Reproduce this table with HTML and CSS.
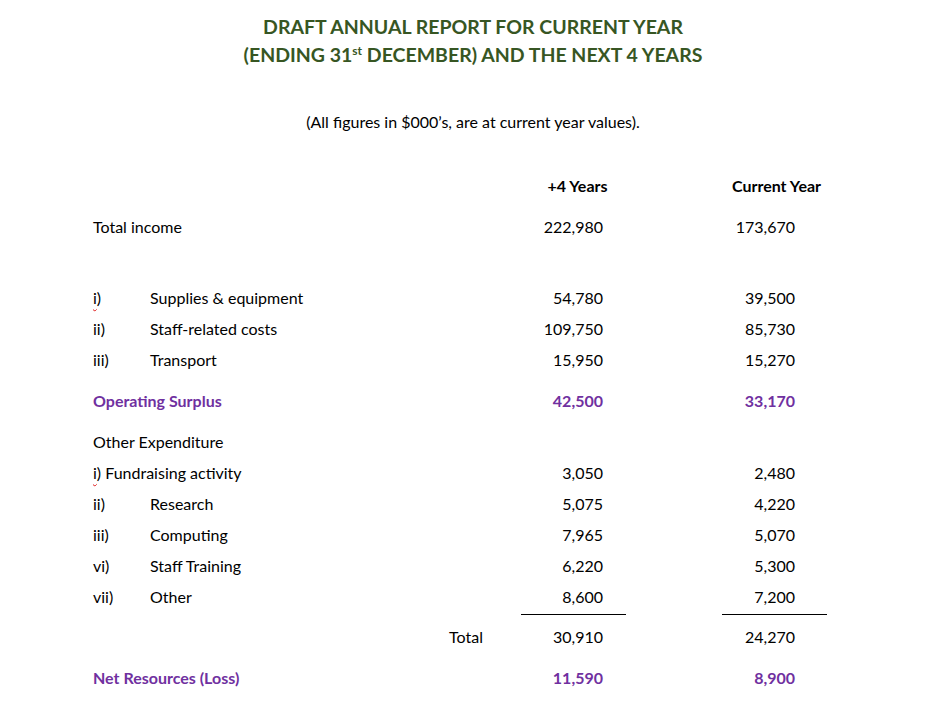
FILE: index.html
```html
<!DOCTYPE html>
<html>
<head>
<meta charset="utf-8">
<link rel="stylesheet" href="styles.css">
</head>
<body>
<div class="page">
  <h1 class="title">DRAFT ANNUAL REPORT FOR CURRENT YEAR<br>(ENDING 31<sup>st</sup> DECEMBER) AND THE NEXT 4 YEARS</h1>
  <p class="subtitle">(All figures in $000’s, are at current year values).</p>

  <div class="sheet">
    <div class="row head">
      <span class="lab"></span><span class="num c1">+4 Years</span><span class="num c2">Current Year</span>
    </div>
    <div class="row sp">
      <span class="lab">Total income</span><span class="num c1">222,980</span><span class="num c2">173,670</span>
    </div>
    <div class="row big">
      <span class="rn"><span class="sq">i</span>)</span><span class="sub">Supplies &amp; equipment</span><span class="num c1">54,780</span><span class="num c2">39,500</span>
    </div>
    <div class="row">
      <span class="rn">ii)</span><span class="sub">Staff-related costs</span><span class="num c1">109,750</span><span class="num c2">85,730</span>
    </div>
    <div class="row">
      <span class="rn">iii)</span><span class="sub">Transport</span><span class="num c1">15,950</span><span class="num c2">15,270</span>
    </div>
    <div class="row sp purple">
      <span class="lab">Operating Surplus</span><span class="num c1">42,500</span><span class="num c2">33,170</span>
    </div>
    <div class="row sp">
      <span class="lab">Other Expenditure</span>
    </div>
    <div class="row">
      <span class="lab"><span class="sq">i</span>) Fundraising activity</span><span class="num c1">3,050</span><span class="num c2">2,480</span>
    </div>
    <div class="row">
      <span class="rn">ii)</span><span class="sub">Research</span><span class="num c1">5,075</span><span class="num c2">4,220</span>
    </div>
    <div class="row">
      <span class="rn">iii)</span><span class="sub">Computing</span><span class="num c1">7,965</span><span class="num c2">5,070</span>
    </div>
    <div class="row">
      <span class="rn">vi)</span><span class="sub">Staff Training</span><span class="num c1">6,220</span><span class="num c2">5,300</span>
    </div>
    <div class="row ruled">
      <span class="rn">vii)</span><span class="sub">Other</span><span class="num c1">8,600</span><span class="num c2">7,200</span>
    </div>
    <div class="row total">
      <span class="lab tot">Total</span><span class="num c1">30,910</span><span class="num c2">24,270</span>
    </div>
    <div class="row sp purple">
      <span class="lab">Net Resources (Loss)</span><span class="num c1">11,590</span><span class="num c2">8,900</span>
    </div>
  </div>
</div>
</body>
</html>
```

FILE: styles.css
```css
* { box-sizing: border-box; }
html, body { margin: 0; padding: 0; background: #fff; }
body {
  font-family: Lato, "Open Sans", "Liberation Sans", sans-serif;
  font-size: 16px;
  color: #000;
  width: 946px;
}
.page { padding-top: 13px; }
.title {
  margin: 0;
  text-align: center;
  font-size: 19.5px;
  line-height: 28px;
  font-weight: 700;
  color: #375623;
}
.title sup {
  font-size: 12px;
  line-height: 0;
  vertical-align: 7px;
}
.subtitle {
  margin: 43px 0 0;
  text-align: center;
  line-height: 20px;
  font-size: 16px;
}
.sheet {
  margin-top: 38px;
  padding-left: 93px;
}
.row {
  display: grid;
  grid-template-columns: 57px 371px 105px 96px 105px;
  height: 31px;
  align-items: center;
  line-height: 31px;
  white-space: nowrap;
}
.row.sp { margin-top: 10px; }
.row.big { margin-top: 40px; }
.row.total { margin-top: 9px; }
.lab { grid-column: 1 / 3; }
.rn { grid-column: 1; }
.sub { grid-column: 2; }
.num { text-align: right; }
.c1 { grid-column: 3; padding-right: 23px; }
.c2 { grid-column: 5; padding-right: 32px; }
.head .num { font-weight: 700; text-align: center; padding-right: 0; }
.head .c1 { padding-left: 8px; }
.head .c2 { padding-left: 4px; }
.purple { color: #7030a0; font-weight: 700; }
.tot { text-align: right; padding-right: 38px; }
.row.ruled { align-items: start; }
.ruled .num { height: 34px; border-bottom: 1px solid #000; }
.sq {
  text-decoration: underline wavy #e02020;
  text-decoration-thickness: 1px;
  text-underline-offset: 3px;
}
```
